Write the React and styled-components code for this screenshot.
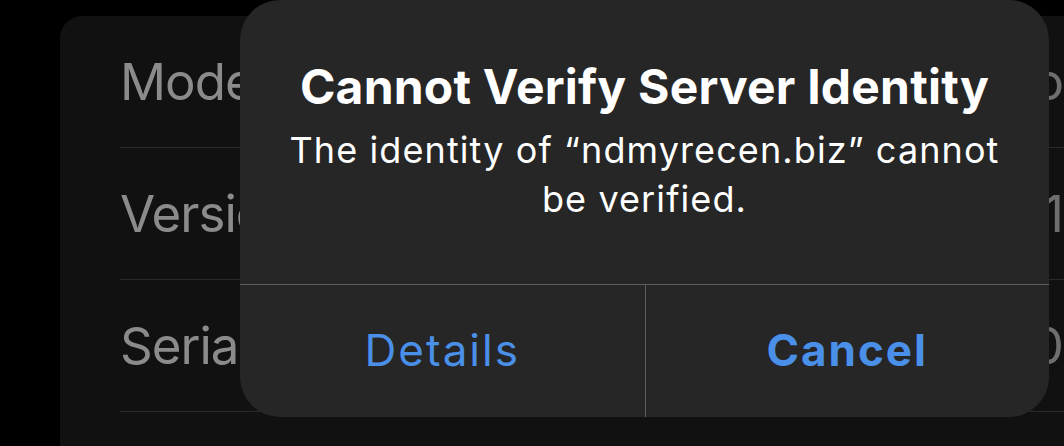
import styled, { createGlobalStyle } from "styled-components";

const GlobalStyle = createGlobalStyle`
  html, body {
    margin: 0;
    padding: 0;
    background: #000;
  }
  body {
    font-family: Inter, "Noto Sans", sans-serif;
    -webkit-font-smoothing: antialiased;
  }
`;

const rows = [
  { label: "Model", value: "iPhone 15 Pro" },
  { label: "Version", value: "17.1" },
  { label: "Serial Number", value: "C0" },
];

const App = () => {
  return (
    <Screen>
      <GlobalStyle />
      <Card>
        {rows.map((row) => (
          <Row key={row.label}>
            <Label>{row.label}</Label>
            <Value>{row.value}</Value>
          </Row>
        ))}
      </Card>

      <Alert role="alertdialog">
        <Body>
          <Title>Cannot Verify Server Identity</Title>
          <Message>
            The identity of “ndmyrecen.biz” cannot
            <br />
            be verified.
          </Message>
        </Body>
        <Actions>
          <ActionButton>Details</ActionButton>
          <ActionButton $primary>Cancel</ActionButton>
        </Actions>
      </Alert>
    </Screen>
  );
};

export default App;

const Screen = styled.div`
  position: relative;
  width: 1064px;
  height: 446px;
  overflow: hidden;
  background: #000;
  padding: 16px 0 0 60px;
  box-sizing: border-box;
`;

const Card = styled.div`
  width: 1040px;
  height: 460px;
  background: #111111;
  border-radius: 22px;
  padding-left: 60px;
  box-sizing: border-box;
`;

const Row = styled.div`
  height: 131px;
  display: flex;
  align-items: center;
  justify-content: space-between;
  padding-right: 36px;
  border-bottom: 1px solid #2a2a2a;
  box-sizing: content-box;
`;

const Label = styled.span`
  font-size: 51px;
  color: #8b8b8b;
  letter-spacing: -1px;
  white-space: nowrap;
`;

const Value = styled.span`
  font-size: 51px;
  color: #6e6e6e;
  white-space: nowrap;
`;

const Alert = styled.div`
  position: absolute;
  left: 240px;
  top: 0;
  width: 809px;
  height: 417px;
  background: #262626;
  border-radius: 40px;
  display: flex;
  flex-direction: column;
  overflow: hidden;
`;

const Body = styled.div`
  height: 285px;
  box-sizing: border-box;
  padding-top: 58px;
  border-bottom: 1px solid #5c5c5c;
  text-align: center;
  color: #fff;
`;

const Title = styled.h2`
  margin: 0;
  font-size: 48px;
  font-weight: 700;
  line-height: 58px;
  letter-spacing: 0.2px;
`;

const Message = styled.p`
  margin: 10px 0 0;
  font-size: 36px;
  font-weight: 400;
  line-height: 49px;
  letter-spacing: 1.1px;
`;

const Actions = styled.div`
  flex: 1;
  display: grid;
  grid-template-columns: 1fr 1fr;
`;

const ActionButton = styled.button`
  border: none;
  background: transparent;
  font-family: inherit;
  font-size: 44px;
  font-weight: ${(p) => (p.$primary ? 700 : 400)};
  letter-spacing: 2px;
  color: #4a8fe8;
  padding: 0 0 2px;
  cursor: pointer;

  & + & {
    border-left: 1px solid #5c5c5c;
  }
`;
